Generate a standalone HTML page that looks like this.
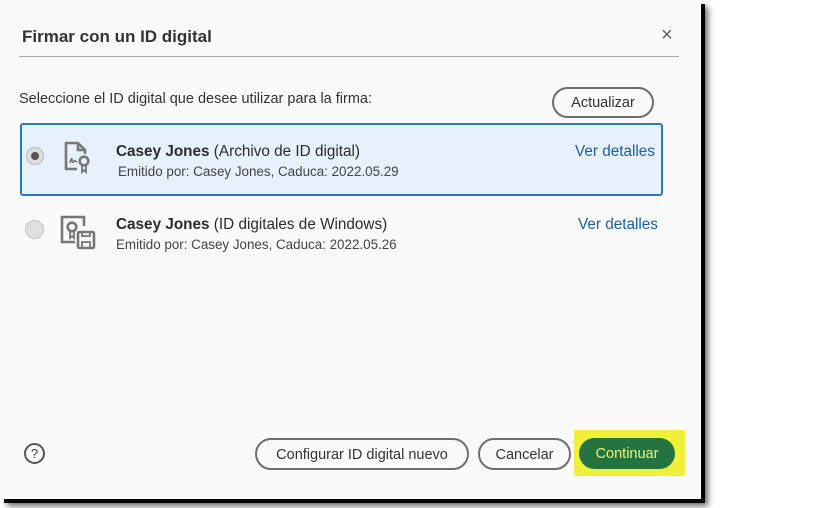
<!DOCTYPE html>
<html><head><meta charset="utf-8"><style>
body{margin:0;width:830px;height:508px;background:#fff;position:relative;overflow:hidden;font-family:"Liberation Sans",sans-serif;color:#2c2c2c}
.dlg{position:absolute;left:0;top:0;width:701px;height:499px;background:#fafafa;box-shadow:4px 4px 0 #000,7px 7px 6px rgba(0,0,0,.6)}
.a{position:absolute;white-space:nowrap}
.btn{position:absolute;border:2px solid #6e6e6e;border-radius:16px;box-sizing:border-box;font-size:14.5px;color:#333;text-align:center}
.link{color:#1a5fa8;font-size:15.3px}
</style></head><body>
<div class="dlg">
<div class="a" style="left:22px;top:27px;font-size:17px;font-weight:bold;color:#333">Firmar con un ID digital</div>
<div class="a" style="left:661px;top:24px;font-size:20px;color:#666">×</div>
<div class="a" style="left:19px;top:56px;width:660px;height:1px;background:#a8a8a8"></div>
<div class="a" style="left:19px;top:91px;font-size:14.5px;color:#333">Seleccione el ID digital que desee utilizar para la firma:</div>
<div class="btn" style="left:552px;top:87px;width:102px;height:31px;line-height:29px">Actualizar</div>

<div class="a" style="left:20px;top:123px;width:643px;height:73px;box-sizing:border-box;border:2px solid #2b78c9;border-radius:3px;background:#e7f1fb"></div>
<div class="a" style="left:26px;top:147px;width:18px;height:18px;border-radius:50%;background:#ddd;border:1px solid #bbb;box-sizing:border-box"></div>
<div class="a" style="left:31px;top:152px;width:8px;height:8px;border-radius:50%;background:#555"></div>
<svg class="a" style="left:63px;top:140px" width="30" height="36" viewBox="0 0 30 36" fill="none" stroke="#777" stroke-width="2.6"><path d="M14 29H3V3h12l7 7v4"/><path d="M15 3v7h7"/><path d="M7 23c1-4 2-6 2-3s1 3 2 1 1 1 3 1" stroke-width="1.5"/><circle cx="21" cy="21" r="4.3"/><path d="M19 25v7l2-2 2 2v-7" stroke-width="1.8"/></svg>
<div class="a" style="left:116px;top:143px;font-size:15.3px"><b>Casey Jones</b> (Archivo de ID digital)</div>
<div class="a" style="left:118px;top:164px;font-size:13.4px;color:#444">Emitido por: Casey Jones, Caduca: 2022.05.29</div>
<div class="a link" style="left:575px;top:143px">Ver detalles</div>

<div class="a" style="left:25px;top:220px;width:19px;height:19px;border-radius:50%;background:#e0e0e0;border:1px solid #c4c4c4;box-sizing:border-box"></div>
<svg class="a" style="left:59px;top:214px" width="38" height="36" viewBox="0 0 38 36" fill="none" stroke="#777" stroke-width="2.6"><path d="M16 28H3V3h22v9"/><circle cx="13" cy="13" r="4.3"/><path d="M11 17v7l2-2 2 2v-7" stroke-width="1.8"/><rect x="19" y="18" width="16" height="16" rx="1.5"/><path d="M23 18v4h8v-4M23 34v-6h8v6" stroke-width="1.8"/></svg>
<div class="a" style="left:116px;top:216px;font-size:15.3px"><b>Casey Jones</b> (ID digitales de Windows)</div>
<div class="a" style="left:116px;top:237px;font-size:13.4px;color:#444">Emitido por: Casey Jones, Caduca: 2022.05.26</div>
<div class="a link" style="left:578px;top:216px">Ver detalles</div>

<div class="a" style="left:24px;top:443px;width:21px;height:21px;border:2px solid #555;border-radius:50%;box-sizing:border-box;font-size:13px;text-align:center;line-height:17px;color:#444">?</div>
<div class="btn" style="left:255px;top:438px;width:214px;height:32px;line-height:30px">Configurar ID digital nuevo</div>
<div class="btn" style="left:478px;top:438px;width:93px;height:32px;line-height:30px">Cancelar</div>
<div class="a" style="left:574px;top:430px;width:111px;height:46px;background:#f0f03a"></div>
<div class="a" style="left:579px;top:438px;width:96px;height:31px;border-radius:16px;background:#23743f;color:#f2f27a;font-size:14.5px;text-align:center;line-height:32px">Continuar</div>
</div>
</body></html>
